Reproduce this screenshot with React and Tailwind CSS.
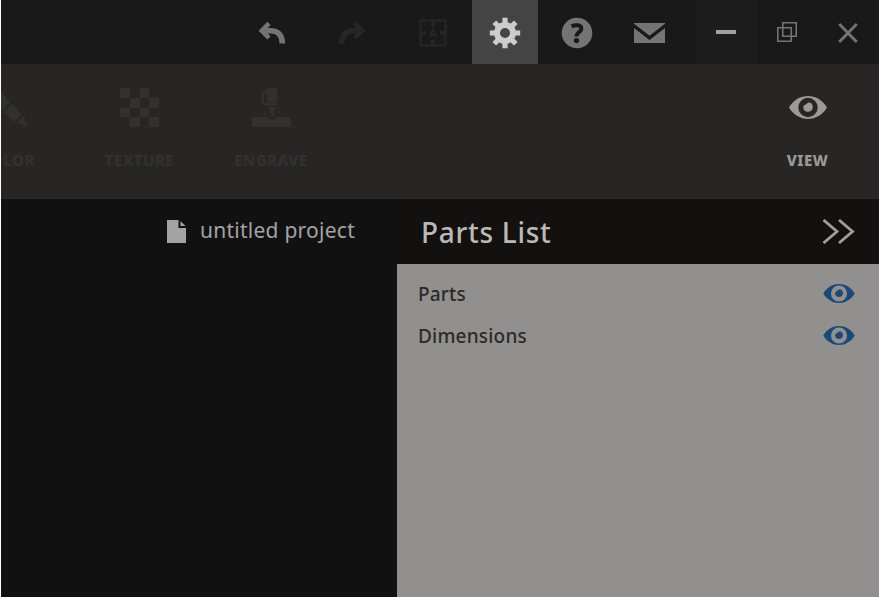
import clsx from 'clsx';

function UndoIcon() {
  return (
    <svg viewBox="0 0 28 24" className="w-7 h-6" fill="none" stroke="currentColor" strokeWidth="4.6">
      <path d="M11 3.4L3.8 10.7L11 18" />
      <path d="M5 10.7H12.5C20 10.7 24.3 15 24.3 23.4" strokeWidth="5.6" />
    </svg>
  );
}

function ArtboardIcon() {
  return (
    <svg viewBox="0 0 28 28" className="w-7 h-7" fill="none" stroke="currentColor" strokeWidth="2.5">
      <path d="M1.5 1.5H26.5V26.5H1.5Z" />
      <path d="M14 2V7M14 21V26M2 14H7M21 14H26" strokeWidth="4" />
      <path d="M10.5 18.5L14 9.5L17.5 18.5M11.5 16H16.5" strokeWidth="2" />
    </svg>
  );
}

function GearIcon() {
  return (
    <svg viewBox="-16 -16 32 32" className="w-8 h-8" fill="currentColor">
      {[0, 45, 90, 135].map((a) => (
        <g key={a} transform={`rotate(${a})`}>
          <path d="M-2.6 -15.2H2.6V-9L-2.6 -9ZM-2.6 9H2.6V15.2H-2.6Z" />
        </g>
      ))}
      <path fillRule="evenodd" d="M0 -11A11 11 0 1 1 0 11A11 11 0 1 1 0 -11ZM0 -5A5 5 0 1 0 0 5A5 5 0 1 0 0 -5Z" />
    </svg>
  );
}

function HelpIcon() {
  return (
    <svg viewBox="0 0 32 32" className="w-8 h-8">
      <circle cx="16" cy="16" r="15.3" fill="currentColor" />
      <path d="M10.6 9.4C14.5 7.4 20.7 7.6 20.3 12C20 15.2 15.4 15.3 15.4 19.4" fill="none" stroke="#191919" strokeWidth="4" />
      <circle cx="15.5" cy="23.6" r="2.7" fill="#191919" />
    </svg>
  );
}

function MailIcon() {
  return (
    <svg viewBox="0 0 31 20" className="w-[31px] h-5">
      <path d="M0 0H31V20H0Z" fill="currentColor" />
      <path d="M-1 2.2L15.5 14.8L32 2.2" fill="none" stroke="#191919" strokeWidth="3.4" />
    </svg>
  );
}

function EyeIcon({ className }) {
  return (
    <svg viewBox="0 0 38 23" className={className} fill="currentColor">
      <path
        fillRule="evenodd"
        d="M0 11.5C9 -3.8 29 -3.8 38 11.5C29 26.8 9 26.8 0 11.5ZM19 1.8A9.7 9.7 0 1 0 19 21.2A9.7 9.7 0 1 0 19 1.8Z"
      />
      <path d="M19 6.8C21.5 5.8 24 8.4 23.8 11.2C23.6 14 21.6 15.8 19 15.8C16.4 15.8 14.4 13.9 14.3 11.4C14.2 9.6 15.4 9.3 16.5 8.8C17.4 8.4 17.8 7.2 19 6.8Z" />
    </svg>
  );
}

function MarkerIcon() {
  return (
    <svg viewBox="0 0 40 40" className="w-10 h-10" fill="currentColor">
      <path d="M0 0L11 0L22 14.5L14 23L0 12Z" />
      <path d="M24 16L34 26.5L26 34L16 24Z" />
      <path d="M36.5 27.5L37 33L40 36L37.5 38.8L34 36L28.5 35.5Z" />
    </svg>
  );
}

function TextureIcon() {
  return (
    <svg viewBox="0 0 4 4" className="w-[39px] h-[39px]" fill="currentColor" shapeRendering="crispEdges">
      <path d="M0 0H1V1H0ZM2 0H3V1H2ZM1 1H2V2H1ZM3 1H4V2H3ZM0 2H1V3H0ZM2 2H3V3H2ZM1 3H2V4H1ZM3 3H4V4H3Z" />
    </svg>
  );
}

function EngraveIcon() {
  return (
    <svg viewBox="0 0 39 39" className="w-[39px] h-[39px]" fill="currentColor">
      <path d="M15 0H25V14H15Z" />
      <path d="M15 4.5H13.5Q10.5 4.5 10.5 8V12Q10.5 16 14 16H24.5" fill="none" stroke="currentColor" strokeWidth="2.4" />
      <path d="M16.5 19H23.5L20 30Z" />
      <path d="M0 29H16L20 33L24 29H39V39H0Z" />
      <path d="M11.5 25H13.5V27H11.5ZM26 23H28V25H26Z" />
    </svg>
  );
}

function Tool({ icon, label, className }) {
  return (
    <div className={clsx('flex shrink-0 flex-col items-center pt-6', className)}>
      <div className="flex h-[39px] items-center justify-center">{icon}</div>
      <span className="mt-[23px] text-[15px] leading-5 font-extrabold tracking-[0.5px]">{label}</span>
    </div>
  );
}

function TopButton({ className, children }) {
  return <button className={clsx('flex h-full shrink-0 items-center justify-center', className)}>{children}</button>;
}

const PARTS = ['Parts', 'Dimensions'];

export default function App() {
  return (
    <div className="h-[597px] w-[879px] overflow-hidden bg-white pl-px font-['Noto_Sans','Open_Sans',sans-serif]">
      <div className="flex h-full flex-col overflow-hidden bg-[#111111]">
        <header className="flex h-16 shrink-0 justify-end bg-[#191919] text-[#747474]">
          <TopButton className="w-20"><UndoIcon /></TopButton>
          <TopButton className="w-20 text-[#262626]"><span className="-scale-x-100"><UndoIcon /></span></TopButton>
          <TopButton className="w-20 pl-px pt-0.5 text-[#252525]"><ArtboardIcon /></TopButton>
          <TopButton className="w-[66px] bg-[#444444] pr-px pt-px text-[#cccccc]"><GearIcon /></TopButton>
          <TopButton className="w-[78px] pt-0.5"><HelpIcon /></TopButton>
          <TopButton className="mr-[13px] w-[67px] pt-px"><MailIcon /></TopButton>
          <TopButton className="w-[61px] bg-[#1d1d1d] pr-px"><span className="h-1 w-5 bg-[#a2a2a2]" /></TopButton>
          <TopButton className="w-[61px] pr-px">
            <svg viewBox="0 0 20 20" className="w-5 h-5" fill="none" stroke="currentColor" strokeWidth="1.6">
              <path d="M5.75 .75H19.25V14.25H5.75ZM.75 5.75H14.25V19.25H.75Z" />
            </svg>
          </TopButton>
          <TopButton className="w-[61px] pr-px pt-px">
            <svg viewBox="0 0 20 20" className="w-5 h-5" fill="none" stroke="currentColor" strokeWidth="2.8">
              <path d="M1.2 1L18.8 19M18.8 1L1.2 19" />
            </svg>
          </TopButton>
        </header>

        <nav className="flex h-[135px] shrink-0 justify-between overflow-hidden border-b border-[#2b2a29] bg-[#272624] text-[#32312f]">
          <div className="-ml-[59px] flex">
            <Tool className="w-[132px]" icon={<MarkerIcon />} label="COLOR" />
            <Tool className="w-[131px]" icon={<TextureIcon />} label="TEXTURE" />
            <Tool className="w-[132px]" icon={<EngraveIcon />} label="ENGRAVE" />
          </div>
          <Tool className="w-[143px] text-[#9b9a98]" icon={<EyeIcon className="w-[38px] h-[23px]" />} label="VIEW" />
        </nav>

        <div className="flex flex-1">
          <main className="flex w-[396px] shrink-0 items-start pl-[166px] text-[#a3a3a3]">
            <div className="flex h-16 items-center gap-[14px]">
              <svg viewBox="0 0 19 23" className="w-[19px] h-[23px]" fill="currentColor">
                <path d="M0 0H11.5V8H19V23H0Z" />
                <path d="M13.5 1L18.5 6H13.5Z" />
              </svg>
              <span className="text-[21px] tracking-[0.25px]">untitled project</span>
            </div>
          </main>
          <aside className="flex flex-1 flex-col bg-[#92908e]">
            <div className="flex h-[65px] items-center justify-between bg-[#12110f] pl-6 pr-6 text-[#bab9b7]">
              <h2 className="text-[28px] font-medium tracking-[0.7px]">Parts List</h2>
              <svg viewBox="0 0 33 25" className="w-[33px] h-[25px]" fill="none" stroke="#a09f9d" strokeWidth="2.8">
                <path d="M1.5 1L15 12.5L1.5 24M17 1L30.5 12.5L17 24" />
              </svg>
            </div>
            <ul className="pt-[9px] pl-[21px] pr-6">
              {PARTS.map((part) => (
                <li key={part} className="flex h-[42px] items-center justify-between">
                  <span className="text-[19px] font-medium tracking-[0.2px] text-[#2b2a29]">{part}</span>
                  <EyeIcon className="mb-px w-8 h-[19px] text-[#194879]" />
                </li>
              ))}
            </ul>
          </aside>
        </div>
      </div>
    </div>
  );
}
